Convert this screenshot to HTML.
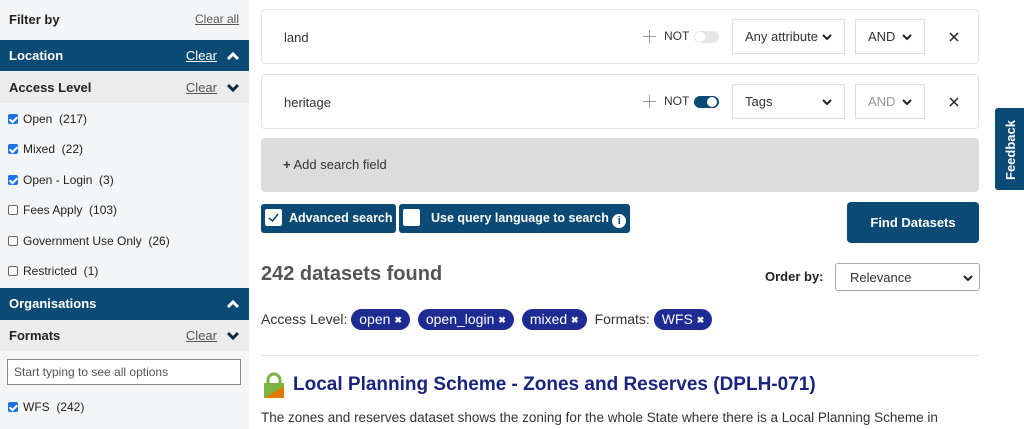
<!DOCTYPE html>
<html><head><style>
*{box-sizing:border-box;margin:0;padding:0}
body{width:1024px;height:429px;overflow:hidden;background:#fff;font-family:"Liberation Sans",Arial,sans-serif;font-size:13px;color:#222;position:relative}
.side{position:absolute;left:0;top:0;width:249px;height:429px;background:#f3f5f7}
.abs{position:absolute}
.hd{position:absolute;left:0;width:249px;height:31px;font-weight:bold;font-size:13px;padding:8px 9px;}
.dark{background:#0b4a75;color:#fff}
.grey{background:#ececec;color:#222}
.clr{position:absolute;right:32px;top:8px;font-weight:normal;text-decoration:underline}
.chev{position:absolute;right:9px;top:11px;width:14px;height:10px}
.item{position:absolute;left:8px;font-size:12px}
.cb{display:inline-block;width:10px;height:10px;border:1px solid #666;border-radius:2px;vertical-align:-1px;margin-right:5px;background:#fff}
.cb.on{background:#1a73e8;border-color:#1a73e8;position:relative}
.cb.on:after{content:"";position:absolute;left:2px;top:0px;width:3px;height:6px;border:solid #fff;border-width:0 2px 2px 0;transform:rotate(45deg)}
.card{position:absolute;left:261px;width:718px;height:55px;border:1px solid #e3e3e3;border-radius:4px;background:#fff}
.sel{position:absolute;height:35px;border:1px solid #ddd;font-size:13px;padding:9px 12px;background:#fff;color:#333;white-space:nowrap}
.sel svg{position:absolute;right:12px;top:14px}
.chip{display:inline-block;background:#1d2b93;color:#fff;border-radius:11px;padding:2px 8px 3px 8px;font-size:14px;margin-right:8px}
.chip i{font-style:normal;font-size:9px;font-weight:bold;vertical-align:1px}
.x{position:absolute;left:687px;top:22px;width:10px;height:10px}
</style></head><body>
<div class="side">
 <div class="abs" style="left:9px;top:12px;font-weight:bold;font-size:13px">Filter by</div>
 <div class="abs" style="left:195px;top:12px;font-size:12px;color:#555;text-decoration:underline">Clear all</div>
 <div class="hd dark" style="top:40px">Location<span class="clr">Clear</span><svg class="chev" viewBox="0 0 14 10"><path d="M2 8L7 3L12 8" stroke="#fff" stroke-width="3" fill="none"/></svg></div>
 <div class="hd grey" style="top:72px">Access Level<span class="clr" style="color:#555">Clear</span><svg class="chev" viewBox="0 0 14 10"><path d="M2 2L7 7L12 2" stroke="#0b2b45" stroke-width="3" fill="none"/></svg></div>
 <div class="item" style="top:112px"><span class="cb on"></span>Open&nbsp; (217)</div>
 <div class="item" style="top:142px"><span class="cb on"></span>Mixed&nbsp; (22)</div>
 <div class="item" style="top:173px"><span class="cb on"></span>Open - Login&nbsp; (3)</div>
 <div class="item" style="top:203px"><span class="cb"></span>Fees Apply&nbsp; (103)</div>
 <div class="item" style="top:234px"><span class="cb"></span>Government Use Only&nbsp; (26)</div>
 <div class="item" style="top:264px"><span class="cb"></span>Restricted&nbsp; (1)</div>
 <div class="hd dark" style="top:288px;height:32px">Organisations<svg class="chev" viewBox="0 0 14 10"><path d="M2 8L7 3L12 8" stroke="#fff" stroke-width="3" fill="none"/></svg></div>
 <div class="hd grey" style="top:320px">Formats<span class="clr" style="color:#555">Clear</span><svg class="chev" viewBox="0 0 14 10"><path d="M2 2L7 7L12 2" stroke="#0b2b45" stroke-width="3" fill="none"/></svg></div>
 <div class="abs" style="left:7px;top:359px;width:234px;height:26px;border:1px solid #888;background:#fff;font-size:12px;color:#555;padding:5px 6px">Start typing to see all options</div>
 <div class="item" style="top:400px"><span class="cb on"></span>WFS&nbsp; (242)</div>
</div>

<div class="card" style="top:9px">
 <div class="abs" style="left:22px;top:20px;font-size:13px;color:#333">land</div>
 <svg class="abs" style="left:381px;top:20px" width="13" height="13"><path d="M6.5 0V13M0 6.5H13" stroke="#999" stroke-width="1"/></svg>
 <div class="abs" style="left:402px;top:19px;font-size:12px;color:#333">NOT</div>
 <div class="abs" style="left:432px;top:21px;width:25px;height:12px;border-radius:6px;background:#e6e6e6"><div style="position:absolute;left:1px;top:1px;width:10px;height:10px;border-radius:5px;background:#fff"></div></div>
 <div class="sel" style="left:470px;top:9px;width:113px">Any attribute<svg width="10" height="7"><path d="M1 1L5 5L9 1" stroke="#222" stroke-width="2" fill="none"/></svg></div>
 <div class="sel" style="left:593px;top:9px;width:70px">AND<svg width="10" height="7"><path d="M1 1L5 5L9 1" stroke="#222" stroke-width="2" fill="none"/></svg></div>
 <svg class="x"><path d="M1 1L9 9M9 1L1 9" stroke="#222" stroke-width="1.5"/></svg>
</div>
<div class="card" style="top:74px">
 <div class="abs" style="left:22px;top:20px;font-size:13px;color:#333">heritage</div>
 <svg class="abs" style="left:381px;top:20px" width="13" height="13"><path d="M6.5 0V13M0 6.5H13" stroke="#999" stroke-width="1"/></svg>
 <div class="abs" style="left:402px;top:19px;font-size:12px;color:#333">NOT</div>
 <div class="abs" style="left:432px;top:21px;width:25px;height:12px;border-radius:6px;background:#0b4a75"><div style="position:absolute;left:13px;top:1px;width:10px;height:10px;border-radius:5px;background:#fff"></div></div>
 <div class="sel" style="left:470px;top:9px;width:113px">Tags<svg width="10" height="7"><path d="M1 1L5 5L9 1" stroke="#222" stroke-width="2" fill="none"/></svg></div>
 <div class="sel" style="left:593px;top:9px;width:70px;color:#999">AND<svg width="10" height="7"><path d="M1 1L5 5L9 1" stroke="#222" stroke-width="2" fill="none"/></svg></div>
 <svg class="x"><path d="M1 1L9 9M9 1L1 9" stroke="#222" stroke-width="1.5"/></svg>
</div>
<div class="abs" style="left:261px;top:138px;width:718px;height:54px;background:#dcdcdc;border-radius:4px;padding:19px 22px;font-size:13px;color:#333"><b>+</b> Add search field</div>

<div class="abs" style="left:261px;top:204px;width:135px;height:29px;background:#0b4a75;border-radius:3px;color:#fff;font-weight:bold;font-size:12.5px;padding:7px 0 0 28px"><div style="position:absolute;left:4px;top:5px;width:17px;height:17px;background:#fff;border-radius:2px"><svg width="17" height="17"><path d="M4 9L7.5 12L13 5" stroke="#0b4a75" stroke-width="1.6" fill="none"/></svg></div>Advanced search</div>
<div class="abs" style="left:399px;top:204px;width:231px;height:29px;background:#0b4a75;border-radius:3px;color:#fff;font-weight:bold;font-size:12.5px;padding:7px 0 0 32px"><div style="position:absolute;left:4px;top:5px;width:17px;height:17px;background:#fff;border-radius:2px"></div>Use query language to search <span style="display:inline-block;width:14px;height:14px;border-radius:7px;background:#fff;color:#0b4a75;font-size:11px;text-align:center;line-height:14px;vertical-align:-2px">i</span></div>
<div class="abs" style="left:847px;top:202px;width:132px;height:41px;background:#0b4a75;border-radius:4px;color:#fff;font-weight:bold;font-size:13px;text-align:center;line-height:41px">Find Datasets</div>

<div class="abs" style="left:261px;top:263px;font-size:20px;font-weight:bold;color:#555">242 datasets found</div>
<div class="abs" style="left:765px;top:269px;font-weight:bold;font-size:13px">Order by:</div>
<div class="abs" style="left:835px;top:263px;width:145px;height:28px;border:1px solid #aaa;border-radius:3px;font-size:13px;padding:6px 14px;color:#333">Relevance<svg style="position:absolute;right:6px;top:11px" width="10" height="7"><path d="M1 1L5 5L9 1" stroke="#222" stroke-width="2" fill="none"/></svg></div>

<div class="abs" style="left:261px;top:309px;font-size:14px;color:#333;white-space:nowrap">Access Level: <span class="chip">open <i>✖</i></span><span class="chip">open_login <i>✖</i></span><span class="chip">mixed <i>✖</i></span>Formats: <span class="chip">WFS <i>✖</i></span></div>
<div class="abs" style="left:261px;top:355px;width:718px;height:1px;background:#e3e3e3"></div>
<div class="abs" style="left:264px;top:372px;width:20px;height:26px"><svg width="20" height="26"><path d="M4 12V8a6 6 0 0 1 12 0v4" stroke="#7cb342" stroke-width="3" fill="none"/><rect x="0" y="11" width="20" height="15" fill="#7cb342"/><path d="M0 26L20 14V26Z" fill="#e07b00"/></svg></div>
<div class="abs" style="left:293px;top:374px;font-size:19px;font-weight:bold;color:#1a237e">Local Planning Scheme - Zones and Reserves (DPLH-071)</div>
<div class="abs" style="left:261px;top:410px;font-size:13.5px;color:#333;white-space:nowrap">The zones and reserves dataset shows the zoning for the whole State where there is a Local Planning Scheme in</div>

<div class="abs" style="left:995px;top:108px;width:29px;height:82px;background:#0b4a75;border-radius:3px 0 0 3px"><div style="position:absolute;left:8px;top:72px;transform:rotate(-90deg);transform-origin:0 0;color:#fff;font-weight:bold;font-size:13px;white-space:nowrap">Feedback</div></div>
</body></html>
